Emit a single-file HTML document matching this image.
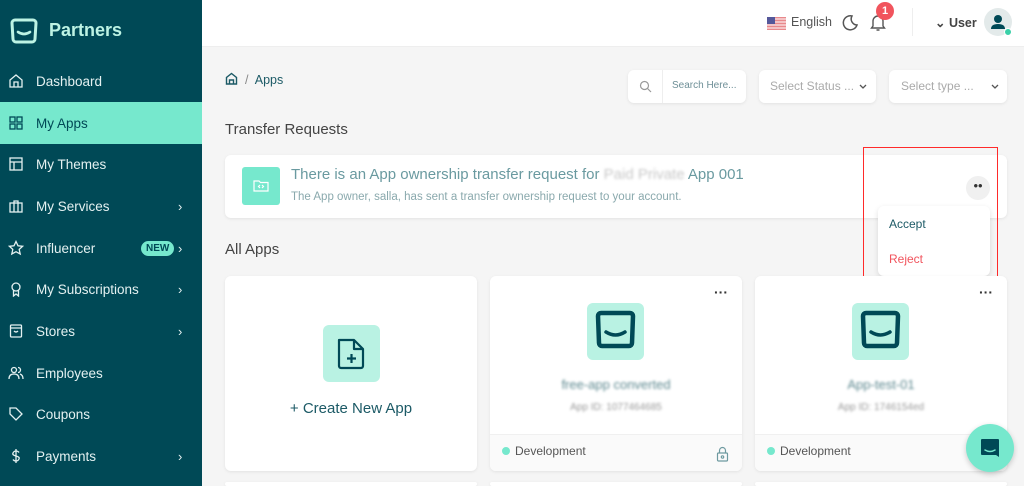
<!DOCTYPE html>
<html style="width:1024px;height:486px;overflow:hidden"><head><meta charset="utf-8"><style>
*{box-sizing:border-box;margin:0;padding:0}
body{width:1024px;height:486px;overflow:hidden;background:#f5f5f5;font-family:"Liberation Sans",sans-serif;position:relative}
.sb{position:absolute;left:0;top:0;width:202px;height:486px;background:#004956;color:#e4f1f1}
.logo{position:absolute;left:9px;top:17px}
.brand{position:absolute;left:49px;top:20px;font-size:18px;font-weight:bold;color:#bdf3e4}
.it{position:absolute;left:0;width:202px;height:42px;display:flex;align-items:center;font-size:13.5px}
.it svg{position:absolute;left:8px}
.it span.t{position:absolute;left:36px}
.it .ch{position:absolute;left:178px;font-size:13px}
.act{background:#76e8cd;color:#004956}
.new{position:absolute;left:141px;background:#76e8cd;color:#004956;font-size:10px;font-weight:bold;border-radius:8px;padding:2px 5px}
.top{position:absolute;left:202px;top:0;right:0;height:47px;background:#fff;border-bottom:1px solid #eee}
.card{position:absolute;background:#fff;border-radius:6px;box-shadow:0 1px 3px rgba(0,0,0,.08)}
.abs{position:absolute}
.blur{filter:blur(1.3px)}
.dots{position:absolute;left:224px;top:8px;font-size:14px;color:#333;letter-spacing:0px;font-weight:bold}
</style></head><body>
<div class="sb">
<svg class="logo" width="30" height="28" viewBox="0 0 30 28"><path d="M6 3h18a3 3 0 0 1 3 3l-1 16a3 3 0 0 1-3 3H7a3 3 0 0 1-3-3L3 6a3 3 0 0 1 3-3z" fill="none" stroke="#bdf3e4" stroke-width="3"/><path d="M9 15q6 4 12 0" fill="none" stroke="#bdf3e4" stroke-width="2.6" stroke-linecap="round"/></svg>
<div class="brand">Partners</div>
<div class="it" style="top:60px"><svg width="16" height="16" viewBox="0 0 16 16" fill="none" stroke="#e4f1f1" stroke-width="1.3"><path d="M2 14V7l6-5 6 5v7zM6 14V9h4v5"/></svg><span class="t">Dashboard</span></div>
<div class="it act" style="top:102px"><svg width="16" height="16" viewBox="0 0 16 16" fill="none" stroke="#004956" stroke-width="1.3"><rect x="2" y="2" width="5" height="5"/><rect x="9" y="2" width="5" height="5"/><rect x="2" y="9" width="5" height="5"/><rect x="9" y="9" width="5" height="5"/></svg><span class="t">My Apps</span></div>
<div class="it" style="top:143px"><svg width="16" height="16" viewBox="0 0 16 16" fill="none" stroke="#e4f1f1" stroke-width="1.3"><rect x="2" y="2" width="12" height="12"/><path d="M2 6h12M6 6v8"/></svg><span class="t">My Themes</span></div>
<div class="it" style="top:185px"><svg width="16" height="16" viewBox="0 0 16 16" fill="none" stroke="#e4f1f1" stroke-width="1.3"><rect x="2" y="5" width="12" height="9"/><path d="M6 5V3h4v2M6 5v9M10 5v9"/></svg><span class="t">My Services</span><span class="ch">›</span></div>
<div class="it" style="top:227px"><svg width="16" height="16" viewBox="0 0 16 16" fill="none" stroke="#e4f1f1" stroke-width="1.3"><path d="M8 1.5l2 4.3 4.6.5-3.4 3.1 1 4.6L8 11.7 3.8 14l1-4.6L1.4 6.3 6 5.8z"/></svg><span class="t">Influencer</span><span class="new">NEW</span><span class="ch">›</span></div>
<div class="it" style="top:268px"><svg width="16" height="16" viewBox="0 0 16 16" fill="none" stroke="#e4f1f1" stroke-width="1.3"><circle cx="8" cy="6" r="4"/><path d="M5.5 9.5V15L8 13l2.5 2V9.5"/></svg><span class="t">My Subscriptions</span><span class="ch">›</span></div>
<div class="it" style="top:310px"><svg width="16" height="16" viewBox="0 0 16 16" fill="none" stroke="#e4f1f1" stroke-width="1.3"><rect x="2.5" y="2" width="11" height="12" rx="1"/><path d="M2.5 5h11M6 8q2 2 4 0"/></svg><span class="t">Stores</span><span class="ch">›</span></div>
<div class="it" style="top:352px"><svg width="16" height="16" viewBox="0 0 16 16" fill="none" stroke="#e4f1f1" stroke-width="1.3"><circle cx="6" cy="5" r="2.5"/><path d="M1 14q0-5 5-5t5 5M10 2.5a2.5 2.5 0 0 1 0 5M12 9q3 1 3 5"/></svg><span class="t">Employees</span></div>
<div class="it" style="top:393px"><svg width="16" height="16" viewBox="0 0 16 16" fill="none" stroke="#e4f1f1" stroke-width="1.3"><path d="M2 2h6l6 6-6 6-6-6z"/></svg><span class="t">Coupons</span></div>
<div class="it" style="top:435px"><svg width="16" height="16" viewBox="0 0 16 16" fill="none" stroke="#e4f1f1" stroke-width="1.3"><path d="M11 4.5Q10 3 8 3T5 5t3 3 3 3-3 2-3-1.5M8 1v14"/></svg><span class="t">Payments</span><span class="ch">›</span></div>
</div>

<div class="top">
<svg class="abs" style="left:565px;top:17px" width="19" height="13" viewBox="0 0 19 13"><rect width="19" height="13" fill="#e8898c"/><path d="M0 2h19M0 5h19M0 8h19M0 11h19" stroke="#fff" stroke-width="1"/><rect width="8" height="7" fill="#55589a"/></svg>
<div class="abs" style="left:589px;top:15px;font-size:12.5px;color:#555">English</div>
<svg class="abs" style="left:640px;top:14px" width="16" height="17" viewBox="0 0 16 17" fill="none" stroke="#555" stroke-width="1.5"><path d="M10 2a7 7 0 1 0 5 9A6 6 0 0 1 10 2z"/></svg>
<svg class="abs" style="left:668px;top:13px" width="16" height="19" viewBox="0 0 16 19" fill="none" stroke="#555" stroke-width="1.4"><path d="M3 13V8a5 5 0 0 1 10 0v5l1.5 2h-13zM6.5 17h3"/></svg>
<div class="abs" style="left:674px;top:2px;width:18px;height:18px;border-radius:9px;background:#f1545d;color:#fff;font-size:11px;font-weight:bold;text-align:center;line-height:18px">1</div>
<div class="abs" style="left:710px;top:8px;width:1px;height:28px;background:#eee"></div>
<div class="abs" style="left:733px;top:15px;font-size:12.5px;color:#444;font-weight:bold">⌄ User</div>
<div class="abs" style="left:782px;top:8px;width:28px;height:28px;border-radius:14px;background:#e3eaea"><svg width="28" height="28" viewBox="0 0 28 28"><circle cx="14" cy="11" r="4" fill="#004956"/><path d="M7 21q0-5 7-5t7 5z" fill="#004956"/><circle cx="24" cy="24" r="3.5" fill="#3ad0a8" stroke="#fff" stroke-width="1"/></svg></div>
</div>

<svg class="abs" style="left:225px;top:72px" width="13" height="13" viewBox="0 0 13 13" fill="none" stroke="#1c5a66" stroke-width="1.4"><path d="M1.5 12V5.5L6.5 1.5l5 4V12zM4.5 12V8h4v4"/></svg>
<div class="abs" style="left:245px;top:73px;font-size:12.5px;color:#1c5a66"><span style="color:#888">/</span>&nbsp; Apps</div>

<div class="card" style="left:628px;top:70px;width:118px;height:33px"><svg class="abs" style="left:11px;top:10px" width="13" height="13" viewBox="0 0 13 13" fill="none" stroke="#999" stroke-width="1.2"><circle cx="5.5" cy="5.5" r="4"/><path d="M8.5 8.5l3.5 3.5"/></svg><div class="abs" style="left:34px;top:0;width:1px;height:33px;background:#eee"></div><div class="abs" style="left:44px;top:10px;font-size:10px;color:#6e8f97">Search Here...</div></div>
<div class="card" style="left:759px;top:70px;width:117px;height:33px"><div class="abs" style="left:11px;top:9px;font-size:12px;color:#aaa">Select Status ...</div><svg class="abs" style="left:100px;top:14px" width="8" height="6" viewBox="0 0 8 6" fill="none" stroke="#555" stroke-width="1.3"><path d="M1 1l3 3 3-3"/></svg></div>
<div class="card" style="left:889px;top:70px;width:118px;height:33px"><div class="abs" style="left:12px;top:9px;font-size:12px;color:#aaa">Select type ...</div><svg class="abs" style="left:102px;top:14px" width="8" height="6" viewBox="0 0 8 6" fill="none" stroke="#555" stroke-width="1.3"><path d="M1 1l3 3 3-3"/></svg></div>

<div class="abs" style="left:225px;top:121px;font-size:15px;color:#444">Transfer Requests</div>
<div class="card" style="left:225px;top:155px;width:782px;height:63px">
<div class="abs" style="left:17px;top:12px;width:38px;height:38px;border-radius:3px;background:#76e8cd"><svg width="38" height="38" viewBox="0 0 38 38" fill="none" stroke="#fff" stroke-width="1.2"><path d="M12 14h5l1.5 1.5H26V24H12z"/><path d="M18 18l-1.5 1.5L18 21M20 18l1.5 1.5L20 21"/></svg></div>
<div class="abs" style="left:66px;top:11px;font-size:15px;color:#6a9aa0">There is an App ownership transfer request for <span class="blur" style="color:#c8c8c8">Paid Private</span> App 001</div>
<div class="abs" style="left:66px;top:36px;font-size:11.5px;color:#8aa9ad">The App owner, salla, has sent a transfer ownership request to your account.</div>
<div class="abs" style="left:741px;top:21px;width:24px;height:24px;border-radius:12px;background:#f0f0f0;font-size:13px;color:#333;text-align:center;line-height:20px">••</div>
</div>
<div class="card" style="left:878px;top:206px;width:112px;height:70px;box-shadow:0 2px 6px rgba(0,0,0,.12)"><div class="abs" style="left:11px;top:11px;font-size:12px;color:#1c5a66">Accept</div><div class="abs" style="left:11px;top:46px;font-size:12px;color:#f1545d">Reject</div></div>
<div class="abs" style="left:863px;top:147px;width:135px;height:137px;border:1px solid #ff2a2a"></div>

<div class="abs" style="left:225px;top:241px;font-size:15px;color:#444">All Apps</div>

<div class="card" style="left:225px;top:276px;width:252px;height:195px">
<div class="abs" style="left:98px;top:49px;width:57px;height:57px;border-radius:6px;background:#b9f2e3"><svg width="57" height="57" viewBox="0 0 57 57" fill="none" stroke="#004956" stroke-width="2.2" stroke-linejoin="round"><path d="M16 15h15l9 9v17a2 2 0 0 1-2 2H18a2 2 0 0 1-2-2z"/><path d="M31 15v9h9"/><path d="M28.5 29v9M24 33.5h9"/></svg></div>
<div class="abs" style="left:0;width:252px;top:124px;text-align:center;font-size:15px;color:#1c5a66">+ Create New App</div>
</div>
<div class="card" style="left:490px;top:276px;width:252px;height:195px;overflow:hidden">
<div class="dots">···</div>
<div class="abs" style="left:97px;top:27px;width:57px;height:57px;border-radius:6px;background:#b9f2e3"><svg width="57" height="57" viewBox="0 0 57 57" fill="none" stroke="#004956" stroke-width="4.5" stroke-linecap="round"><path d="M14 10h29a3 3 0 0 1 3 3l-1 27a3 3 0 0 1-3 3H15a3 3 0 0 1-3-3l-1-27a3 3 0 0 1 3-3z"/><path d="M19 29q9.5 6 19 0" stroke-width="3.5"/></svg></div>
<div class="abs blur" style="left:0;width:252px;top:101px;text-align:center;font-size:13px;color:#5f8a91">free-app converted</div>
<div class="abs blur" style="left:0;width:252px;top:126px;text-align:center;font-size:10px;color:#999">App ID: 1077464685</div>
<div class="abs" style="left:0;top:158px;width:252px;height:37px;background:#fafafa;border-top:1px solid #f0f0f0"></div>
<div class="abs" style="left:12px;top:171px;width:8px;height:8px;border-radius:4px;background:#76e8cd"></div>
<div class="abs" style="left:25px;top:168px;font-size:12px;color:#555">Development</div>
<svg class="abs" style="left:226px;top:170px" width="13" height="16" viewBox="0 0 13 16" fill="none" stroke="#6e9aa0" stroke-width="1.2"><path d="M3.5 7V4.5a3 3 0 0 1 6 0V7"/><rect x="1.5" y="7" width="10" height="8" rx="1"/><circle cx="6.5" cy="11" r="1.2"/></svg>
</div>
<div class="card" style="left:755px;top:276px;width:252px;height:195px;overflow:hidden">
<div class="dots">···</div>
<div class="abs" style="left:97px;top:27px;width:57px;height:57px;border-radius:6px;background:#b9f2e3"><svg width="57" height="57" viewBox="0 0 57 57" fill="none" stroke="#004956" stroke-width="4.5" stroke-linecap="round"><path d="M14 10h29a3 3 0 0 1 3 3l-1 27a3 3 0 0 1-3 3H15a3 3 0 0 1-3-3l-1-27a3 3 0 0 1 3-3z"/><path d="M19 29q9.5 6 19 0" stroke-width="3.5"/></svg></div>
<div class="abs blur" style="left:0;width:252px;top:101px;text-align:center;font-size:13px;color:#5f8a91">App-test-01</div>
<div class="abs blur" style="left:0;width:252px;top:126px;text-align:center;font-size:10px;color:#999">App ID: 1746154ed</div>
<div class="abs" style="left:0;top:158px;width:252px;height:37px;background:#fafafa;border-top:1px solid #f0f0f0"></div>
<div class="abs" style="left:12px;top:171px;width:8px;height:8px;border-radius:4px;background:#76e8cd"></div>
<div class="abs" style="left:25px;top:168px;font-size:12px;color:#555">Development</div>
</div>
<div class="card" style="left:225px;top:482px;width:252px;height:4px"></div>
<div class="card" style="left:490px;top:482px;width:252px;height:4px"></div>
<div class="card" style="left:755px;top:482px;width:252px;height:4px"></div>

<div class="abs" style="left:966px;top:424px;width:48px;height:48px;border-radius:24px;background:#76e8cd;box-shadow:0 2px 6px rgba(0,0,0,.2)"><svg width="48" height="48" viewBox="0 0 48 48"><path d="M16 15h16a1 1 0 0 1 1 1v17l-3-2H16a1 1 0 0 1-1-1V16a1 1 0 0 1 1-1z" fill="#004956"/><path d="M19 26q5 3 10 0" stroke="#76e8cd" stroke-width="1.5" fill="none" stroke-linecap="round"/></svg></div>
</body></html>
